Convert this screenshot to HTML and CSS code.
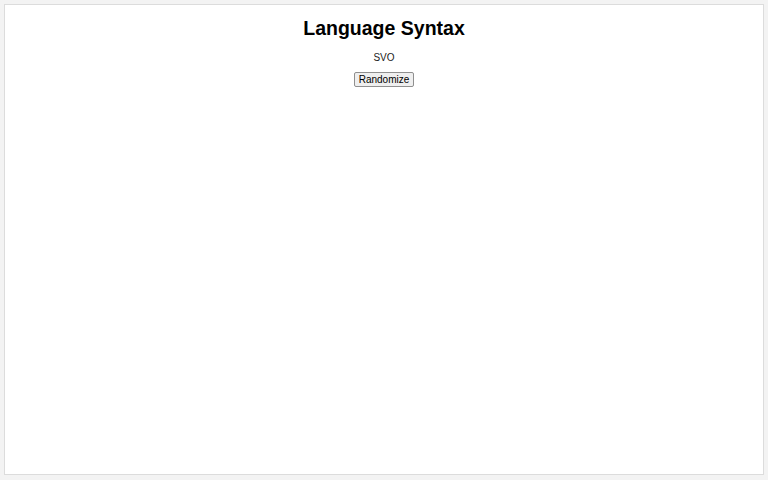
FILE: index.html
```html
<!DOCTYPE html>
<html>
<head>
<meta charset="utf-8">
<link rel="stylesheet" href="styles.css">
</head>
<body>
<main class="panel">
  <h1 class="title">Language Syntax</h1>
  <p class="order">SVO</p>
  <button class="btn" type="button">Randomize</button>
</main>
</body>
</html>
```
FILE: styles.css
```css
html, body {
  margin: 0;
  height: 100%;
}
body {
  background: #f3f3f3;
  padding: 4px 4px 5px 4px;
  box-sizing: border-box;
  font-family: "Liberation Sans", Arial, sans-serif;
}
.panel {
  background: #fff;
  border: 1px solid #dcdcdc;
  height: 100%;
  box-sizing: border-box;
  display: flex;
  flex-direction: column;
  align-items: center;
}
.title {
  font-size: 19.5px;
  font-weight: bold;
  margin: 12px 0 0;
  line-height: 22px;
  color: #000;
}
.order {
  font-size: 10px;
  margin: 13px 0 0;
  line-height: 12px;
  color: #222;
}
.btn {
  margin-top: 8px;
  font-family: "Liberation Sans", Arial, sans-serif;
  font-size: 10px;
  line-height: 11px;
  padding: 1px 4px;
  background: #efefef;
  border: 1px solid #8f8f8f;
  border-radius: 2px;
  color: #000;
}
```
